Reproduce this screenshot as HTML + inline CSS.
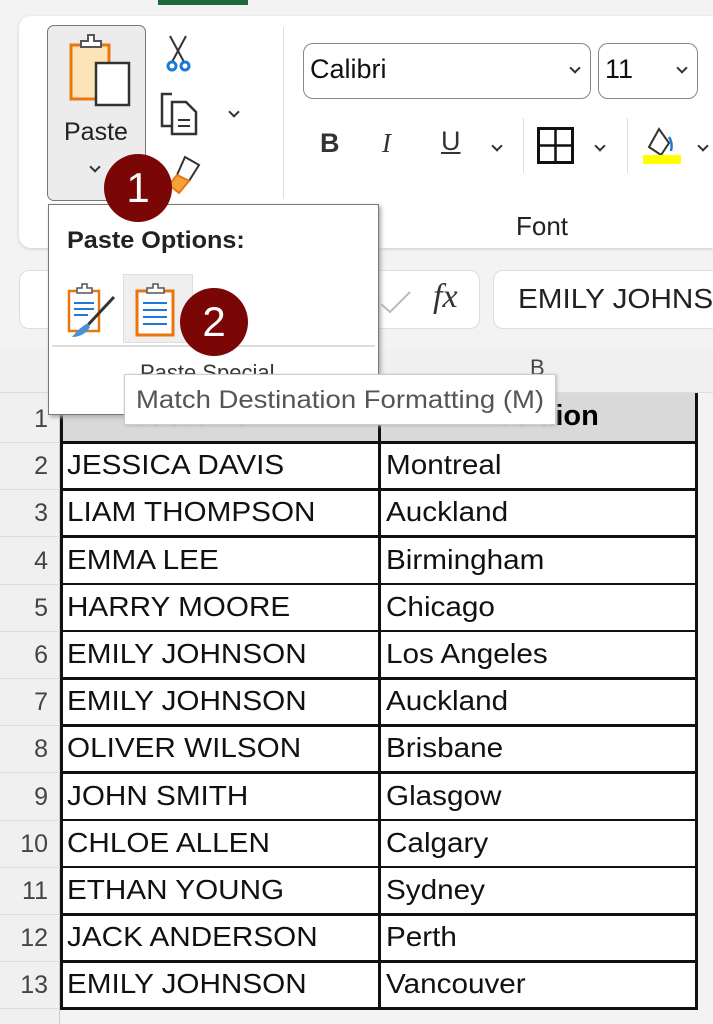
<!DOCTYPE html>
<html><head><meta charset="utf-8"><style>
*{margin:0;padding:0;box-sizing:border-box}
html,body{width:713px;height:1024px;overflow:hidden}
body{background:#f3f3f3;font-family:"Liberation Sans",sans-serif;position:relative}
.a{position:absolute}
.t{font-size:28px;color:#111;white-space:nowrap;transform:scaleX(1.06);transform-origin:left center}
.circ{position:absolute;width:68px;height:68px;border-radius:50%;background:#7a0606;color:#fff;font-size:42px;text-align:center;line-height:68px}
.chev{position:absolute;width:8px;height:8px;border-right:2px solid #333;border-bottom:2px solid #333;transform:rotate(45deg)}
</style></head><body>
<div class="a" style="left:158px;top:0;width:90px;height:5px;background:#1e6b3a"></div>
<div class="a" style="left:19px;top:16px;width:694px;height:232px;background:#fff;border-radius:12px 0 0 12px;box-shadow:0 1px 3px #ccc"></div>
<div class="a" style="left:47px;top:25px;width:99px;height:176px;background:#ececec;border:1.5px solid #777;border-radius:7px"></div>
<svg class="a" style="left:66px;top:33px" width="70" height="75">
<rect x="5" y="12" width="38" height="54" fill="#fde4b8" stroke="#e8770e" stroke-width="3"/>
<path d="M15 14 v-6 h7 v-6 h6 v6 h7 v6 z" fill="#fff" stroke="#555" stroke-width="2"/>
<rect x="30" y="30" width="33" height="42" fill="#fff" stroke="#333" stroke-width="2.5"/>
</svg>
<div class="a" style="left:64px;top:118px;font-size:25px;color:#222">Paste</div>
<div class="chev" style="left:91px;top:163px"></div>
<svg class="a" style="left:164px;top:34px" width="30" height="40"><path d="M6 2 L20 28 M22 2 L8 28" stroke="#333" stroke-width="2"/><circle cx="8" cy="32" r="4" fill="#fff" stroke="#1c7ad6" stroke-width="3"/><circle cx="21" cy="32" r="4" fill="#fff" stroke="#1c7ad6" stroke-width="3"/></svg>
<svg class="a" style="left:158px;top:92px" width="44" height="44"><path d="M14 2 H4 V34 H14" fill="none" stroke="#333" stroke-width="2.5"/><path d="M14 10 H28 L38 20 V42 H14 Z" fill="#fff" stroke="#333" stroke-width="2.5"/><path d="M20 28 H32 M20 34 H32" stroke="#333" stroke-width="2"/></svg>
<div class="chev" style="left:230px;top:108px"></div>
<svg class="a" style="left:165px;top:155px" width="36" height="40"><path d="M20 2 L34 10 L24 26 L12 20 Z" fill="#fff" stroke="#333" stroke-width="2"/><path d="M12 20 L24 26 L14 38 L4 30 Z" fill="#f6a23a" stroke="#e8770e" stroke-width="2"/></svg>
<div class="a" style="left:283px;top:27px;width:1px;height:172px;background:#ddd"></div>
<div class="a" style="left:303px;top:43px;width:288px;height:56px;border:1.5px solid #888;border-radius:10px"></div>
<div class="a" style="left:310px;top:54px;font-size:27px;color:#111">Calibri</div>
<div class="chev" style="left:571px;top:64px"></div>
<div class="a" style="left:598px;top:43px;width:100px;height:56px;border:1.5px solid #888;border-radius:10px"></div>
<div class="a" style="left:605px;top:54px;font-size:27px;color:#111">11</div>
<div class="chev" style="left:678px;top:64px"></div>
<div class="a" style="left:320px;top:128px;font-size:27px;font-weight:bold;color:#333">B</div>
<div class="a" style="left:382px;top:128px;font-size:27px;font-style:italic;font-family:'Liberation Serif',serif;color:#333">I</div>
<div class="a" style="left:441px;top:126px;font-size:27px;text-decoration:underline;color:#333">U</div>
<div class="chev" style="left:493px;top:142px"></div>
<div class="a" style="left:523px;top:118px;width:1px;height:55px;background:#ddd"></div>
<svg class="a" style="left:537px;top:127px" width="40" height="38"><rect x="1.5" y="1.5" width="34" height="34" fill="none" stroke="#111" stroke-width="3"/><path d="M18.5 2 V36 M2 18.5 H36" stroke="#111" stroke-width="2.5"/></svg>
<div class="chev" style="left:596px;top:142px"></div>
<div class="a" style="left:627px;top:118px;width:1px;height:55px;background:#ddd"></div>
<svg class="a" style="left:643px;top:125px" width="40" height="42"><path d="M6 22 L16 4 L26 18 L18 30 Z" fill="#fff" stroke="#333" stroke-width="2"/><path d="M26 12 q4 6 2 14" fill="none" stroke="#1c7ad6" stroke-width="2.5"/><rect x="0" y="30" width="38" height="9" fill="#ffff00"/></svg>
<div class="chev" style="left:699px;top:142px"></div>
<div class="a" style="left:516px;top:211px;font-size:26px;color:#222">Font</div>
<div class="a" style="left:19px;top:270px;width:461px;height:59px;background:#fff;border:1.5px solid #ddd;border-radius:10px"></div>
<svg class="a" style="left:378px;top:280px" width="40" height="40"><path d="M3 24 L12 32 L32 12" fill="none" stroke="#bbb" stroke-width="2"/></svg>
<div class="a" style="left:433px;top:278px;font-size:34px;font-style:italic;font-family:'Liberation Serif',serif;color:#333">fx</div>
<div class="a" style="left:493px;top:270px;width:220px;height:59px;background:#fff;border:1.5px solid #ddd;border-right:none;border-radius:10px 0 0 10px;overflow:hidden">
<div class="a t" style="left:24px;top:12px;color:#222">EMILY JOHNSON</div></div>
<div class="a" style="left:0;top:350px;width:713px;height:43px;background:#f0f0f0;border-bottom:1px solid #ddd"></div>
<div class="a" style="left:530px;top:355px;font-size:22px;color:#444">B</div>
<div class="a" style="left:0;top:393px;width:60px;height:631px;background:#f0f0f0;border-right:1px solid #ccc"></div>
<div class="a" style="left:60px;top:393px;width:638px;height:616px;background:#fff"></div>
<div class="a" style="left:60px;top:393px;width:638px;height:50px;background:#d9d9d9"></div>
<div class="a" style="left:130px;top:400px;font-size:28px;font-weight:bold">Customer</div>
<div class="a" style="left:478px;top:400px;font-size:29px;font-weight:bold">Location</div>
<div id="g"></div>
<script>
var d=[["JESSICA DAVIS","Montreal"],["LIAM THOMPSON","Auckland"],["EMMA LEE","Birmingham"],["HARRY MOORE","Chicago"],["EMILY JOHNSON","Los Angeles"],["EMILY JOHNSON","Auckland"],["OLIVER WILSON","Brisbane"],["JOHN SMITH","Glasgow"],["CHLOE ALLEN","Calgary"],["ETHAN YOUNG","Sydney"],["JACK ANDERSON","Perth"],["EMILY JOHNSON","Vancouver"]];
var h="";
for(var i=0;i<13;i++){var y=395+i*47.2;
h+='<div class="a" style="left:0;top:'+(y+10)+'px;width:48px;text-align:right;font-size:25px;color:#444">'+(i+1)+'</div>';
h+='<div class="a" style="left:0;top:'+(y+47)+'px;width:60px;height:1px;background:#ddd"></div>';
if(i>0){h+='<div class="a t" style="left:67px;top:'+(y+7)+'px">'+d[i-1][0]+'</div><div class="a t" style="left:386px;top:'+(y+7)+'px">'+d[i-1][1]+'</div>';}
h+='<div class="a" style="left:60px;top:'+(y+46)+'px;width:638px;height:2.5px;background:#111"></div>';}
h+='<div class="a" style="left:60px;top:393px;width:2.5px;height:616px;background:#111"></div><div class="a" style="left:378px;top:393px;width:2.5px;height:616px;background:#111"></div><div class="a" style="left:695px;top:393px;width:2.5px;height:616px;background:#111"></div>';
document.getElementById("g").innerHTML=h;
</script>
<div class="a" style="left:48px;top:204px;width:331px;height:211px;background:#fff;border:1.5px solid #777;box-shadow:2px 2px 4px #aaa"></div>
<div class="a" style="left:67px;top:227px;font-size:24px;font-weight:bold;color:#222;transform:scaleX(1.05);transform-origin:left">Paste Options:</div>
<svg class="a" style="left:66px;top:283px" width="52" height="56"><rect x="3" y="8" width="30" height="40" fill="#fff" stroke="#e8770e" stroke-width="2.5"/><path d="M11 10 v-5 h5 v-4 h5 v4 h5 v5z" fill="#fff" stroke="#555" stroke-width="1.5"/><path d="M8 20 H28 M8 26 H28 M8 32 H22" stroke="#1c7ad6" stroke-width="2"/><path d="M48 14 L20 44" stroke="#333" stroke-width="3"/><path d="M22 40 q-8 4 -16 14 q12 0 18 -10z" fill="#4a8fd8"/></svg>
<div class="a" style="left:123px;top:274px;width:70px;height:69px;background:#efefef;border:1px solid #ddd"></div>
<svg class="a" style="left:134px;top:283px" width="46" height="56"><rect x="3" y="8" width="36" height="44" fill="#fff" stroke="#e8770e" stroke-width="3"/><path d="M13 10 v-5 h6 v-4 h5 v4 h6 v5z" fill="#fff" stroke="#555" stroke-width="1.5"/><path d="M9 20 H33 M9 27 H33 M9 34 H33 M9 41 H33" stroke="#1c7ad6" stroke-width="2"/></svg>
<div class="a" style="left:52px;top:345px;width:323px;height:2px;background:#ddd"></div>
<div class="a" style="left:140px;top:360px;font-size:22px;color:#333">Paste Special</div>
<div class="a" style="left:124px;top:374px;width:432px;height:51px;background:#fff;border:1px solid #ccc;box-shadow:1px 1px 3px #bbb"></div>
<div class="a" style="left:136px;top:386px;font-size:25px;color:#555;white-space:nowrap;transform:scaleX(1.1);transform-origin:left">Match Destination Formatting (M)</div>
<div class="circ" style="left:104px;top:154px">1</div>
<div class="circ" style="left:180px;top:288px">2</div>
</body></html>
